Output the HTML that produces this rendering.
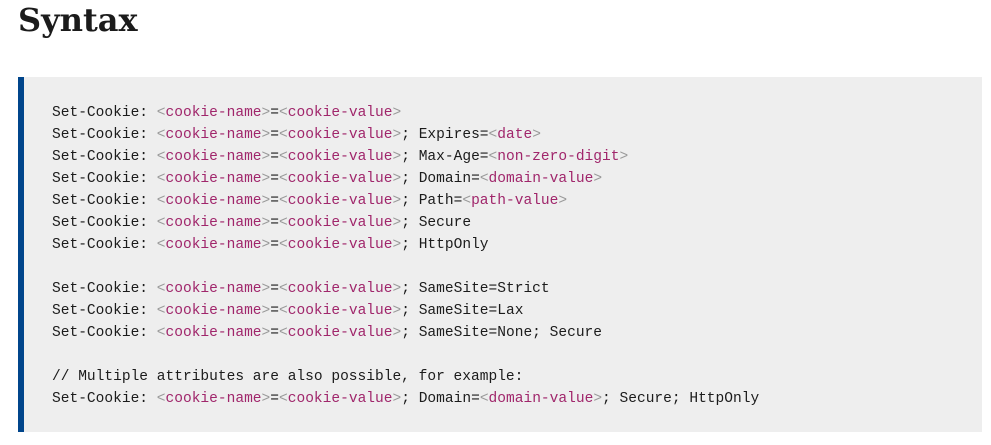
<!DOCTYPE html>
<html><head><style>
body{margin:0;background:#fff;width:991px;height:445px;overflow:hidden}
h2{position:absolute;left:18px;top:0px;margin:0;font:bold 32px/40px "DejaVu Serif",serif;color:#1b1b1b}
pre{position:absolute;left:18px;top:77px;margin:0;padding:25px 0 20px 28px;background:#eeeeee;border-left:6px solid #00458b;font:14.55px/22px "Liberation Mono",monospace;color:#1b1b1b;height:310px;width:930px}
.p{color:#a0266b}.g{color:#999}
</style></head><body>
<h2>Syntax</h2>
<pre>Set-Cookie: <span class="g">&lt;</span><span class="p">cookie-name</span><span class="g">&gt;</span>=<span class="g">&lt;</span><span class="p">cookie-value</span><span class="g">&gt;</span>
Set-Cookie: <span class="g">&lt;</span><span class="p">cookie-name</span><span class="g">&gt;</span>=<span class="g">&lt;</span><span class="p">cookie-value</span><span class="g">&gt;</span>; Expires=<span class="g">&lt;</span><span class="p">date</span><span class="g">&gt;</span>
Set-Cookie: <span class="g">&lt;</span><span class="p">cookie-name</span><span class="g">&gt;</span>=<span class="g">&lt;</span><span class="p">cookie-value</span><span class="g">&gt;</span>; Max-Age=<span class="g">&lt;</span><span class="p">non-zero-digit</span><span class="g">&gt;</span>
Set-Cookie: <span class="g">&lt;</span><span class="p">cookie-name</span><span class="g">&gt;</span>=<span class="g">&lt;</span><span class="p">cookie-value</span><span class="g">&gt;</span>; Domain=<span class="g">&lt;</span><span class="p">domain-value</span><span class="g">&gt;</span>
Set-Cookie: <span class="g">&lt;</span><span class="p">cookie-name</span><span class="g">&gt;</span>=<span class="g">&lt;</span><span class="p">cookie-value</span><span class="g">&gt;</span>; Path=<span class="g">&lt;</span><span class="p">path-value</span><span class="g">&gt;</span>
Set-Cookie: <span class="g">&lt;</span><span class="p">cookie-name</span><span class="g">&gt;</span>=<span class="g">&lt;</span><span class="p">cookie-value</span><span class="g">&gt;</span>; Secure
Set-Cookie: <span class="g">&lt;</span><span class="p">cookie-name</span><span class="g">&gt;</span>=<span class="g">&lt;</span><span class="p">cookie-value</span><span class="g">&gt;</span>; HttpOnly

Set-Cookie: <span class="g">&lt;</span><span class="p">cookie-name</span><span class="g">&gt;</span>=<span class="g">&lt;</span><span class="p">cookie-value</span><span class="g">&gt;</span>; SameSite=Strict
Set-Cookie: <span class="g">&lt;</span><span class="p">cookie-name</span><span class="g">&gt;</span>=<span class="g">&lt;</span><span class="p">cookie-value</span><span class="g">&gt;</span>; SameSite=Lax
Set-Cookie: <span class="g">&lt;</span><span class="p">cookie-name</span><span class="g">&gt;</span>=<span class="g">&lt;</span><span class="p">cookie-value</span><span class="g">&gt;</span>; SameSite=None; Secure

// Multiple attributes are also possible, for example:
Set-Cookie: <span class="g">&lt;</span><span class="p">cookie-name</span><span class="g">&gt;</span>=<span class="g">&lt;</span><span class="p">cookie-value</span><span class="g">&gt;</span>; Domain=<span class="g">&lt;</span><span class="p">domain-value</span><span class="g">&gt;</span>; Secure; HttpOnly</pre>
</body></html>
